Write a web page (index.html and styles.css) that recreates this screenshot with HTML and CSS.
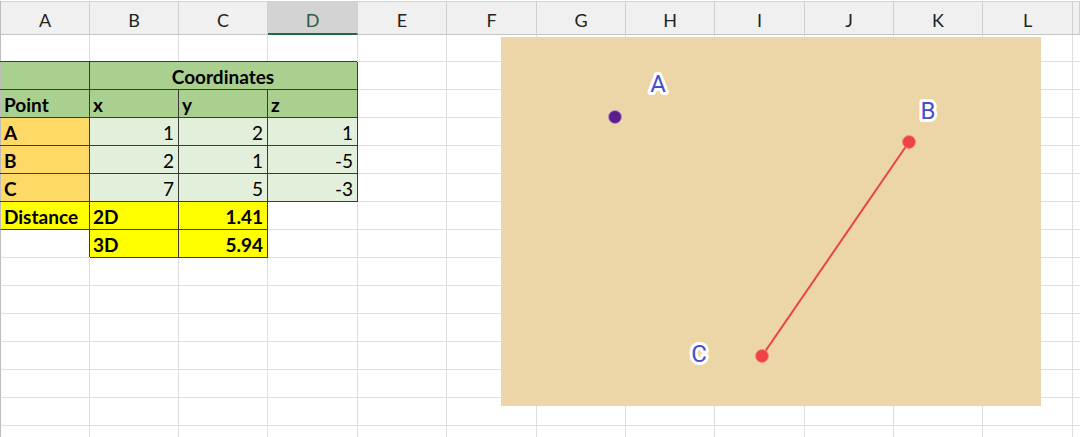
FILE: index.html
```html
<!DOCTYPE html>
<html>
<head>
<meta charset="utf-8">
<link rel="stylesheet" href="styles.css">
</head>
<body>
<div class="sheet">
  <div class="topstrip"></div>
  <div class="row head">
    <div>A</div><div>B</div><div>C</div><div class="sel">D</div><div>E</div><div>F</div><div>G</div><div>H</div><div>I</div><div>J</div><div>K</div><div>L</div><div></div>
  </div>
  <div class="row first">
    <div></div><div></div><div></div><div></div><div></div><div></div><div></div><div></div><div></div><div></div><div></div><div></div><div></div>
  </div>
  <div class="row">
    <div class="tb green"></div><div class="tb green bold center span3">Coordinates</div><div></div><div></div><div></div><div></div><div></div><div></div><div></div><div></div><div></div>
  </div>
  <div class="row">
    <div class="tb green bold">Point</div><div class="tb green bold">x</div><div class="tb green bold">y</div><div class="tb green bold">z</div><div></div><div></div><div></div><div></div><div></div><div></div><div></div><div></div><div></div>
  </div>
  <div class="row">
    <div class="tb orange bold">A</div><div class="tb light num">1</div><div class="tb light num">2</div><div class="tb light num">1</div><div></div><div></div><div></div><div></div><div></div><div></div><div></div><div></div><div></div>
  </div>
  <div class="row">
    <div class="tb orange bold">B</div><div class="tb light num">2</div><div class="tb light num">1</div><div class="tb light num">-5</div><div></div><div></div><div></div><div></div><div></div><div></div><div></div><div></div><div></div>
  </div>
  <div class="row">
    <div class="tb orange bold">C</div><div class="tb light num">7</div><div class="tb light num">5</div><div class="tb light num">-3</div><div></div><div></div><div></div><div></div><div></div><div></div><div></div><div></div><div></div>
  </div>
  <div class="row">
    <div class="tb yellow bold">Distance</div><div class="tb yellow bold">2D</div><div class="tb yellow bold num">1.41</div><div></div><div></div><div></div><div></div><div></div><div></div><div></div><div></div><div></div><div></div>
  </div>
  <div class="row">
    <div></div><div class="tb yellow bold">3D</div><div class="tb yellow bold num">5.94</div><div></div><div></div><div></div><div></div><div></div><div></div><div></div><div></div><div></div><div></div>
  </div>
  <div class="row">
    <div></div><div></div><div></div><div></div><div></div><div></div><div></div><div></div><div></div><div></div><div></div><div></div><div></div>
  </div>
  <div class="row">
    <div></div><div></div><div></div><div></div><div></div><div></div><div></div><div></div><div></div><div></div><div></div><div></div><div></div>
  </div>
  <div class="row">
    <div></div><div></div><div></div><div></div><div></div><div></div><div></div><div></div><div></div><div></div><div></div><div></div><div></div>
  </div>
  <div class="row">
    <div></div><div></div><div></div><div></div><div></div><div></div><div></div><div></div><div></div><div></div><div></div><div></div><div></div>
  </div>
  <div class="row">
    <div></div><div></div><div></div><div></div><div></div><div></div><div></div><div></div><div></div><div></div><div></div><div></div><div></div>
  </div>
  <div class="row">
    <div></div><div></div><div></div><div></div><div></div><div></div><div></div><div></div><div></div><div></div><div></div><div></div><div></div>
  </div>
  <div class="row">
    <div></div><div></div><div></div><div></div><div></div><div></div><div></div><div></div><div></div><div></div><div></div><div></div><div></div>
  </div>

  <div class="chart">
    <svg width="540" height="369" viewBox="0 0 540 369">
      <line x1="408" y1="105" x2="261" y2="319" stroke="#e84444" stroke-width="2"/>
      <circle cx="114" cy="80" r="6.5" fill="#5a1d8c" stroke="#b890c8" stroke-width="1"/>
      <circle cx="408" cy="105" r="6.5" fill="#ef4242" stroke="#f58a8a" stroke-width="1"/>
      <circle cx="261" cy="319" r="6.5" fill="#ef4242" stroke="#f58a8a" stroke-width="1"/>
      <text class="lbl" x="157" y="47">A</text>
      <text class="lbl" x="427" y="74">B</text>
      <text class="lbl" x="198" y="317">C</text>
    </svg>
  </div>
</div>
</body>
</html>
```

FILE: styles.css
```css
html, body {
  margin: 0;
  padding: 0;
  background: #ffffff;
  overflow: hidden;
}
body {
  width: 1080px;
  height: 437px;
  font-family: Lato, "Liberation Sans", sans-serif;
  font-size: 19px;
  color: #000;
}
.sheet {
  position: relative;
  width: 1080px;
  height: 437px;
  overflow: hidden;
}
.topstrip {
  height: 1px;
  background: #ffffff;
}
.row {
  display: grid;
  grid-template-columns: 90px 89px 89px 90px 89px 90px 89px 89px 90px 89px 89px 90px 7px;
  height: 28px;
}
.row > div {
  box-sizing: border-box;
  border-right: 1px solid #dedede;
  border-bottom: 1px solid #dedede;
  display: flex;
  align-items: center;
  padding: 2px 4px 0 3px;
  white-space: nowrap;
  overflow: visible;
}
.row > div:first-child {
  border-left: 1px solid #bdbdbd;
}
.row.first {
  height: 27px;
}
.row.head {
  height: 34px;
  font-size: 18px;
}
.row.head > div {
  background: #f0f0f0;
  border-top: 1px solid #d4d4d4;
  border-right: 1px solid #d0d0d0;
  border-bottom: 1px solid #c4c4c4;
  justify-content: center;
  padding: 4px 0 0 0;
  color: #222;
}
.row.head > div.sel {
  background: #d3d3d3;
  border-bottom: 2px solid #1f6b43;
  color: #2f5a44;
}
.row > div.tb {
  border-right-color: #3a3a3a;
  border-bottom-color: #3a3a3a;
  box-shadow: -1px -1px 0 #3a3a3a;
}
.green { background: #a9d08e; }
.light { background: #e2efda; }
.orange { background: #ffd966; }
.yellow { background: #ffff00; }
.bold { font-weight: 700; }
.center { justify-content: center; }
.num { justify-content: flex-end; }
.span3 { grid-column: span 3; }

.chart {
  position: absolute;
  left: 501px;
  top: 37px;
  width: 540px;
  height: 369px;
  background: #ecd6a8;
}
.chart svg {
  display: block;
}
.lbl {
  font-family: Roboto, "Noto Sans", sans-serif;
  font-size: 24px;
  fill: #3f51cf;
  stroke: #ffffff;
  stroke-width: 6px;
  stroke-linejoin: round;
  paint-order: stroke;
  text-anchor: middle;
  dominant-baseline: central;
}
```
